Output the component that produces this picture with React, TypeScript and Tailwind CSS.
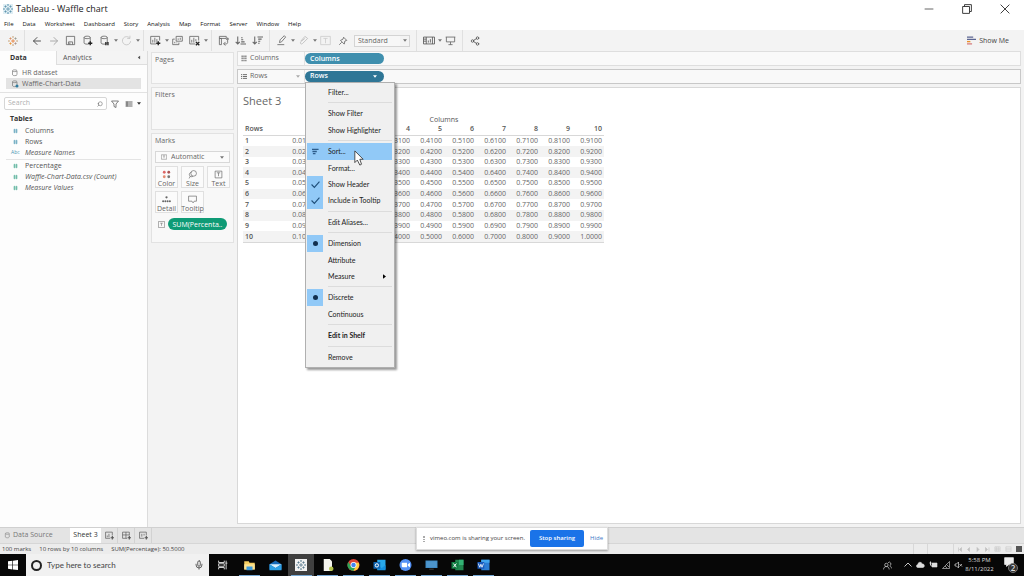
import React from "react";
import { ArrowLeft, ArrowRight, Mic, Search, Share2 } from "lucide-react";

type IconProps = { children: React.ReactNode; className?: string; box?: string };

function Icon({ children, className = "w-[11px] h-[11px] text-[#666]", box = "0 0 16 16" }: IconProps) {
  return (
    <svg viewBox={box} className={`shrink-0 ${className}`} fill="none" stroke="currentColor" strokeWidth="1.2" aria-hidden="true">
      {children}
    </svg>
  );
}

function Caret({ className = "text-[#777]" }: { className?: string }) {
  return (
    <svg viewBox="0 0 8 5" className={`w-[4px] h-[3px] shrink-0 ${className}`} fill="currentColor" aria-hidden="true">
      <path d="M0 0h8L4 5z" />
    </svg>
  );
}

function TableauMark({ className, color }: { className: string; color?: string }) {
  return (
    <Icon className={className}>
      <g strokeWidth="1.3">
        <path d="M8 5v6M5 8h6" stroke={color || "#e8762d"} />
        <path d="M4 2.2v3.6M2.2 4h3.6" stroke={color || "#d98a5b"} />
        <path d="M12 2.2v3.6M10.2 4h3.6" stroke={color || "#9a9a8b"} />
        <path d="M4 10.2v3.6M2.2 12h3.6" stroke={color || "#eb912c"} />
        <path d="M12 10.2v3.6M10.2 12h3.6" stroke={color || "#a58c82"} />
        <path d="M8 0v3M6.5 1.5h3M8 13v3M6.5 14.5h3M1.5 6.5v3M0 8h3M14.5 6.5v3M13 8h3" stroke={color || "#c9a57c"} strokeWidth="1" />
      </g>
    </Icon>
  );
}

function Tool({ label, children }: { label: string; children: React.ReactNode }) {
  return (
    <button aria-label={label} className="w-[17px] h-full flex items-center justify-center shrink-0 text-[#555]">
      {children}
    </button>
  );
}

const Drop = () => (
  <span className="w-[5px] flex justify-center shrink-0">
    <Caret />
  </span>
);
const Divider = () => (
  <span className="w-[7px] h-full flex justify-center shrink-0">
    <span className="w-px h-full bg-[#e0e0e0]" />
  </span>
);

const Cylinder = () => <path d="M3 3.5c0-2.4 9-2.4 9 0v8c0 2.4-9 2.4-9 0zM3 3.5c0 2.4 9 2.4 9 0" />;

function Toolbar() {
  return (
    <div className="h-[21px] shrink-0 bg-[#f3f3f3] flex items-center pl-1 pr-[15px]">
      <Tool label="Start page"><TableauMark className="w-[10px] h-[10px]" /></Tool>
      <Divider />
      <Tool label="Undo"><ArrowLeft className="w-[12px] h-[12px]" /></Tool>
      <Tool label="Redo"><ArrowRight className="w-[12px] h-[12px] text-[#aaa]" /></Tool>
      <Tool label="Save"><Icon><path d="M2 2h12v12H2zM5 14v-4h6v4M7 11v3" /></Icon></Tool>
      <Tool label="New data source">
        <Icon><Cylinder /><path d="M12 9v6M9 12h6" stroke="#222" strokeWidth="2" /></Icon>
      </Tool>
      <Tool label="Pause auto updates">
        <Icon><Cylinder /><path d="M10 10v5M13 10v5" stroke="#222" strokeWidth="2" /></Icon>
      </Tool>
      <Drop />
      <Tool label="Run update">
        <Icon className="w-[11px] h-[11px] text-[#c4c4c4]"><path d="M13 5A6 6 0 1 0 14 9M13 1v4H9" /></Icon>
      </Tool>
      <Drop />
      <Divider />
      <Tool label="New worksheet">
        <Icon><path d="M14 8V2H1v11h8M4 11V7M7 11V4M10 10V6" /><path d="M12 9v6M9 12h6" stroke="#222" strokeWidth="2" /></Icon>
      </Tool>
      <Drop />
      <Tool label="Duplicate"><Icon><path d="M6 2h9v7H6zM4 6H1v8h9v-3M9 7V5M12 7V4M4 12v-2M7 12v-1" /></Icon></Tool>
      <Tool label="Clear sheet">
        <Icon><path d="M14 8V2H1v11h8M4 11V7M7 11V4M10 9V6" /><path d="M10 10l5 5M15 10l-5 5" stroke="#222" strokeWidth="2" /></Icon>
      </Tool>
      <Drop />
      <Divider />
      <Tool label="Swap rows and columns"><Icon><path d="M2 2h10v3H2zM2 5h3v9H2zM14 5v6c0 2-2 2-5 2M11 10l-3 3 3 2M12 7l2-3 2 3" /></Icon></Tool>
      <Tool label="Sort ascending"><Icon><path d="M4 2v11M1 10l3 3 3-3M9 4h2M9 7h3M9 10h5M8 13h8" strokeWidth="1.5" /></Icon></Tool>
      <Tool label="Sort descending"><Icon><path d="M4 2v11M1 10l3 3 3-3M8 3h8M9 6h5M9 9h3M9 12h2" strokeWidth="1.5" /></Icon></Tool>
      <Divider />
      <Tool label="Highlight"><Icon><path d="M5 11l1-4 6-6 2 2-6 7zM2 14h10" /></Icon></Tool>
      <Drop />
      <Tool label="Group members"><Icon className="w-[11px] h-[11px] text-[#bbb]"><path d="M4 9l6-7 4 3-7 7c-3 3-5-1-2-3l5-4" /></Icon></Tool>
      <Drop />
      <Tool label="Show mark labels"><Icon className="w-[11px] h-[11px] text-[#ccc]"><path d="M1 2h14v12H1zM5 5h6M8 5v7" /></Icon></Tool>
      <Tool label="Fix axes"><Icon className="w-[10px] h-[10px] text-[#555]"><path d="M9 2l5 5-3 1-1 5-6-6 4-2zM6 10l-4 4" /></Icon></Tool>
      <select aria-label="Fit" defaultValue="Standard" className="appearance-none ml-[3px] w-[46px] h-[12px] border border-[#d4d4d4] border-r-0 bg-[#f7f7f7] pl-[3px] text-[7px] leading-[10px] text-[#666] outline-none">
        <option>Standard</option>
      </select>
      <span className="w-[10px] mr-[3px] h-[12px] border border-[#d4d4d4] border-l-0 flex items-center justify-center shrink-0"><Caret /></span>
      <Divider />
      <Tool label="Show cards"><Icon className="w-[12px] h-[11px] text-[#555]"><path d="M0 3h16v10H0zM4 3v10M0 6h4M0 9h4M7 11V8M10 11V6M13 3v10" /></Icon></Tool>
      <Drop />
      <Tool label="Presentation mode"><Icon><path d="M1 3h14M2 3v7h12V3M8 10v4M5 14h6" /></Icon></Tool>
      <Divider />
      <Tool label="Share"><Share2 className="w-[10px] h-[10px]" /></Tool>
      <button className="ml-auto flex items-center gap-[3px] text-[7px] leading-[10px] text-[#444] whitespace-nowrap">
        <Icon className="w-[9px] h-[9px]">
          <path d="M0 2h11M0 6h16" stroke="#5c6692" strokeWidth="2.5" />
          <path d="M0 10h6" stroke="#eb912c" strokeWidth="2.5" />
          <path d="M0 14h9" stroke="#d98888" strokeWidth="2.5" />
        </Icon>
        Show Me
      </button>
    </div>
  );
}

const fields = [
  { name: "Columns", color: "text-[#4996b2]" },
  { name: "Rows", color: "text-[#4996b2]" },
  { name: "Measure Names", color: "text-[#4996b2]", abc: true, italic: true },
  { name: "Percentage", color: "text-[#3fa78c]", top: true },
  { name: "Waffle-Chart-Data.csv (Count)", color: "text-[#3fa78c]", italic: true },
  { name: "Measure Values", color: "text-[#3fa78c]", italic: true },
];

function DataPane() {
  return (
    <aside className="w-[148px] shrink-0 bg-[#fdfdfd] border-r border-[#dcdcdc] text-[#555] text-[7px]">
      <div className="flex h-[14px] leading-[14px]">
        <button className="w-[56px] pl-[10px] text-left font-bold text-[#333]">Data</button>
        <button className="flex-1 px-[6px] flex justify-between items-center bg-[#f4f4f4] border-l border-b border-[#dedede]">
          Analytics
          <Caret className="rotate-90" />
        </button>
      </div>
      <ul className="pl-[6px] pr-[6px] pt-[2px] pb-[3px] border-b border-[#e2e2e2] leading-[11px] text-[#666]">
        <li className="flex items-center gap-[3px] pl-[5px]">
          <Icon className="w-[8px] h-[8px]"><Cylinder /></Icon>HR dataset
        </li>
        <li className="flex items-center gap-[3px] pl-[5px] bg-[#e3e3e3]">
          <Icon className="w-[8px] h-[8px]"><Cylinder /><circle cx="12" cy="12" r="3" fill="#2e7ca0" stroke="none" /></Icon>Waffle-Chart-Data
        </li>
      </ul>
      <div className="flex items-center pl-1 pr-[6px] pt-1 gap-[4px]">
        <label className="flex items-center w-[106px] h-[13px] border border-[#d6d6d6] rounded-[2px] px-[3px] bg-white">
          <input placeholder="Search" aria-label="Search fields" className="w-full min-w-0 outline-none placeholder:text-[#b0b0b0]" />
          <Search className="w-[6px] h-[6px] shrink-0 -scale-x-100" />
        </label>
        <Icon className="w-[8px] h-[8px]"><path d="M1 2h14L10 8v7l-4-2V8z" strokeWidth="1.5" /></Icon>
        <Icon className="w-[8px] h-[8px] ml-[2px]"><path d="M1 4h14M1 8h14M1 12h14M4 3v10" strokeWidth="1.8" /></Icon>
        <Caret className="text-[#333]" />
      </div>
      <h2 className="pl-[10px] mt-[3px] font-bold leading-[11px] text-[#333]">Tables</h2>
      <ul className="mt-[1px] mx-[6px] leading-[11px]">
        {fields.map((f) => (
          <li key={f.name} className={`flex items-center pl-[5px] ${f.top ? "border-t border-[#e4e4e4] mt-px" : ""}`}>
            {f.abc ? (
              <span className="w-[14px] text-[5px] text-[#4996b2]">Abc</span>
            ) : (
              <span className="w-[14px] flex pl-[2px]">
                <Icon className={`w-[5px] h-[6px] ${f.color}`}><path d="M5 1v14M11 1v14M1 5h14M1 11h14" strokeWidth="2" /></Icon>
              </span>
            )}
            <span className={`whitespace-nowrap ${f.italic ? "italic" : ""}`}>{f.name}</span>
          </li>
        ))}
      </ul>
    </aside>
  );
}

const marks = [
  {
    name: "Color",
    icon: <g stroke="none"><circle cx="4" cy="4" r="2.5" fill="#d66" /><circle cx="12" cy="4" r="2.5" fill="#a55" /><circle cx="4" cy="12" r="2.5" fill="#e38b72" /><circle cx="12" cy="12" r="2.5" fill="#777" /></g>,
  },
  { name: "Size", icon: <><circle cx="10" cy="6" r="5" /><path d="M6 4a4 4 0 1 0 3 7M4 11l-2 4" /></> },
  { name: "Text", icon: <path d="M2 2h12v12H2zM5 5h6M8 5v6" /> },
  { name: "Detail", icon: <g fill="currentColor" stroke="none"><circle cx="8" cy="4" r="2" /><circle cx="2" cy="11" r="1.8" /><circle cx="6" cy="11" r="1.8" /><circle cx="10" cy="11" r="1.8" /><circle cx="14" cy="11" r="1.8" /></g> },
  { name: "Tooltip", icon: <path d="M1 2h14v9h-4l-2 3-2-3H1z" /> },
];

function Cards() {
  const card = "mx-[3px] bg-[#f8f8f8] border border-[#e2e2e2] px-[3px] pt-[2px] leading-[9px]";
  return (
    <div className="w-[89px] shrink-0 bg-[#f3f3f3] flex flex-col gap-[3px] text-[7px] text-[#666] pt-px">
      <section className={`${card} h-[32px]`}>Pages</section>
      <section className={`${card} h-[43px]`}>Filters</section>
      <section className={`${card} h-[110px]`}>
        <h3>Marks</h3>
        <div className="mt-[6px] h-[12px] flex items-center border border-[#d8d8d8] bg-[#fbfbfb] px-[5px]">
          <Icon className="w-[6px] h-[6px]"><path d="M1 2h14v12H1zM5 5h6M8 5v6" /></Icon>
          <select aria-label="Mark type" className="appearance-none outline-none flex-1 pl-[4px] leading-[10px]"><option>Automatic</option></select>
          <Caret />
        </div>
        <div className="grid grid-cols-3 gap-[3px] mt-[3px]">
          {marks.map((m) => (
            <button key={m.name} className="h-[22px] border border-[#e0e0e0] bg-[#fbfbfb] flex flex-col items-center justify-between pt-[3px] leading-[9px]">
              <Icon className="w-[9px] h-[9px]">{m.icon}</Icon>
              {m.name}
            </button>
          ))}
        </div>
        <div className="flex items-center gap-[3px] mt-[5px] pl-[3px]">
          <Icon className="w-[7px] h-[7px]"><path d="M1 1h14v14H1zM5 5h6M8 5v6" /></Icon>
          <button className="w-[59px] h-[12px] rounded-full bg-[#0f9b76] text-white font-medium">SUM(Percenta..</button>
        </div>
      </section>
    </div>
  );
}

type MenuItem = { label: string; mark?: "check" | "dot" | "sort"; active?: boolean; bold?: boolean; sub?: boolean };
const menu: MenuItem[][] = [
  [{ label: "Filter..." }],
  [{ label: "Show Filter" }, { label: "Show Highlighter" }],
  [
    { label: "Sort...", mark: "sort", active: true },
    { label: "Format..." },
    { label: "Show Header", mark: "check" },
    { label: "Include in Tooltip", mark: "check" },
  ],
  [{ label: "Edit Aliases..." }],
  [{ label: "Dimension", mark: "dot" }, { label: "Attribute" }, { label: "Measure", sub: true }],
  [{ label: "Discrete", mark: "dot" }, { label: "Continuous" }],
  [{ label: "Edit in Shelf", bold: true }],
  [{ label: "Remove" }],
];

function RowsMenu() {
  return (
    <div role="menu" className="absolute z-10 left-0 top-full w-[90px] h-[286px] flex flex-col pl-px pr-[2px] pt-px pb-[2px] bg-[#f0f0f0] border border-[#b0b0b0] shadow-[2px_2px_2px_rgba(0,0,0,0.4)] text-[7px] text-[#222] font-[Lato,sans-serif]">
      {menu.map((group, i) => (
        <React.Fragment key={i}>
          {i > 0 && <div className="h-[5px] shrink-0 flex items-center"><span className="h-px w-full ml-[21px] bg-[#dcdcdc]" /></div>}
          {group.map((item) => (
            <button key={item.label} role="menuitem" className={`flex-1 min-h-0 flex items-center text-left whitespace-nowrap ${item.active ? "bg-[#91c9f7]" : ""} ${item.bold ? "font-bold" : ""}`}>
              <span className={`w-[16px] h-full mr-[5px] flex items-center justify-center ${item.mark ? "bg-[#91c9f7]" : ""}`}>
                {item.mark === "check" && <Icon className="w-[9px] h-[9px] text-[#1f4e79]"><path d="M1 8l5 5 9-10" strokeWidth="2" /></Icon>}
                {item.mark === "dot" && <span className="w-[5px] h-[5px] rounded-full bg-[#12304f]" />}
                {item.mark === "sort" && <Icon className="w-[7px] h-[7px] text-[#2d5c8a]"><path d="M0 3h15M1 8h10M2 13h6" strokeWidth="3" /></Icon>}
              </span>
              {item.label}
              {item.sub && (
                <svg viewBox="0 0 4 6" className="ml-auto mr-[6px] w-[3px] h-[5px]" aria-hidden="true"><path d="M0 0l4 3-4 3z" /></svg>
              )}
            </button>
          ))}
        </React.Fragment>
      ))}
      <svg viewBox="0 0 12 19" className="absolute left-[48px] top-[67px] w-[10px] h-[16px]" aria-hidden="true">
        <path d="M1 1v14l3-3 3 6 2-1-2-6h4z" fill="#fff" stroke="#333" strokeWidth="1" />
      </svg>
    </div>
  );
}

function Shelves() {
  return (
    <div className="flex flex-col gap-[3px] text-[7px] text-[#666]">
      <div className="h-[15px] flex items-center bg-[#f9f9f9] border border-[#dedede]">
        <div className="w-[67px] h-full flex items-center gap-[3px] pl-[3px] border-r border-[#e2e2e2]">
          <Icon className="w-[6px] h-[7px]"><path d="M3 0v16M8 0v16M13 0v16" strokeWidth="3" strokeDasharray="4 1.5" /></Icon>Columns
        </div>
        <button className="w-[79px] h-[11px] rounded-full bg-[#3f8fae] text-white font-semibold text-left leading-[11px] pl-[5px]">Columns</button>
      </div>
      <div className="h-[15px] flex items-center bg-[#f9f9f9] border border-[#c8c8c8]">
        <div className="w-[67px] h-full flex items-center gap-[3px] pl-[3px] pr-[4px] border-r border-[#e2e2e2]">
          <Icon className="w-[6px] h-[7px]"><path d="M0 3h16M0 8h16M0 13h16" strokeWidth="2.5" strokeDasharray="3 2 11" /></Icon>
          <span className="flex-1">Rows</span>
          <Caret className="text-[#aaa]" />
        </div>
        <div className="relative">
          <button className="w-[79px] h-[11px] rounded-full bg-[#2f7696] text-white font-semibold flex items-center justify-between pl-[5px] pr-[7px]">
            Rows<Caret className="text-white" />
          </button>
          <RowsMenu />
        </div>
      </div>
    </div>
  );
}

const ten = Array.from({ length: 10 }, (_, i) => i + 1);

function Sheet() {
  return (
    <main className="flex-1 min-h-0 mt-[3px] bg-white border border-[#d8d8d8] pl-[5px] pt-[5px] text-[#666]">
      <h1 className="text-[11px] leading-[16px]">Sheet 3</h1>
      <table className="mt-[6px] w-[361px] h-[128px] table-fixed border-collapse text-[7px] leading-[8px] text-right">
        <thead className="text-[#555]">
          <tr className="h-[9px]">
            <td className="w-[41px] p-0" />
            <th colSpan={10} className="font-normal text-center p-0">Columns</th>
          </tr>
          <tr className="h-[11px] border-b border-[#d8d8d8]">
            <th className="font-semibold text-left p-0 pl-[2px]">Rows</th>
            {ten.map((c) => <th key={c} className="font-semibold p-0 pr-[2px]">{c}</th>)}
          </tr>
        </thead>
        <tbody>
          {ten.map((r) => (
            <tr key={r} className="even:bg-[#f3f3f3] last:border-b border-[#d8d8d8]">
              <th className="font-semibold text-left p-0 pl-[2px] text-[#555]">{r}</th>
              {ten.map((c) => <td key={c} className="p-0 pr-[2px]">{((c - 1) / 10 + r / 100).toFixed(4)}</td>)}
            </tr>
          ))}
        </tbody>
      </table>
    </main>
  );
}

function SheetTabs() {
  return (
    <div className="h-[16px] shrink-0 flex items-center bg-[#e4e4e4] border-t border-[#d0d0d0] text-[7px] text-[#777]">
      <button className="w-[70px] pl-[4px] flex items-center gap-[2px]">
        <Icon className="w-[7px] h-[7px]"><Cylinder /></Icon>Data Source
      </button>
      <button className="w-[31px] h-full bg-white text-[#333] font-medium whitespace-nowrap">Sheet 3</button>
      {["New worksheet", "New dashboard", "New story"].map((label, i) => (
        <button key={label} aria-label={label} className="w-[17px] h-full flex items-center justify-center border-r border-[#d2d2d2] text-[#555]">
          <Icon className="w-[9px] h-[9px]">
            <path d={["M13 8V2H1v11h8M4 11V8M7 11V5", "M13 8V2H1v11h8M7 2v11M1 7h12", "M13 8V2H1v11h8M5 5v5M9 5v3"][i]} />
            <path d="M13 9v6M10 12h6" strokeWidth="2" />
          </Icon>
        </button>
      ))}
    </div>
  );
}

function StatusBar() {
  return (
    <div className="h-[11px] shrink-0 flex items-center gap-[8px] pl-[2px] pr-[2px] bg-[#ececec] border-t border-[#d6d6d6] text-[6px] text-[#444] whitespace-nowrap">
      <span>100 marks</span>
      <span>10 rows by 10 columns</span>
      <span>SUM(Percentage): 50.5000</span>
      <div className="ml-auto h-full flex items-center gap-[4px] text-[#c0c0c0]">
        <span className="w-[15px] h-full border-x border-[#d8d8d8]" />
        <span className="w-[22px] h-full border-r border-[#d8d8d8]" />
        <Icon className="w-[32px] h-[5px]" box="0 0 64 10">
          <path d="M1 1v8M7 1L3 5l4 4zM23 1l-4 4 4 4zM38 1l4 4-4 4zM55 1l4 4-4 4zM62 1v8" fill="currentColor" />
        </Icon>
        <Icon className="w-[7px] h-[6px]"><path d="M1 2h14v12H1zM1 6h14M1 10h14M5 2v12M10 2v12" /></Icon>
        <Icon className="w-[7px] h-[6px]"><path d="M1 2h14v12H1zM1 6h14M1 10h14" /></Icon>
        <span className="w-[6px] h-[6px] bg-[#555]" />
      </div>
    </div>
  );
}

const apps = [
  { name: "File Explorer", open: true, art: <><path d="M1 3h6l1 2h7v9H1z" fill="#f5ce62" /><path d="M1 7h14v7H1z" fill="#fbe293" /><path d="M4 10h8v5H4z" fill="#3d9bdc" /></> },
  { name: "Mail", open: false, art: <><path d="M0 7l8-5 8 5v7H0z" fill="#1769b5" /><path d="M0 7h16l-8 5z" fill="#d7effc" /><path d="M0 7l8 5 8-5v8H0z" fill="#2ea0e3" /></> },
  { name: "Tableau", open: true, active: true, art: null },
  { name: "Document", open: true, art: <><path d="M3 0h8l3 3v13H3z" fill="#f5f5ee" /><circle cx="13" cy="13" r="3" fill="#b3c34c" /></> },
  { name: "Chrome", open: true, art: <><circle cx="8" cy="8" r="8" fill="#db4437" /><path d="M1 4a8 8 0 0 0 7 12l3-6H5z" fill="#2fa457" /><path d="M8 16a8 8 0 0 0 7-11H8l3 5z" fill="#ffcd40" /><circle cx="8" cy="8" r="4" fill="#fff" /><circle cx="8" cy="8" r="3" fill="#4285f4" /></> },
  { name: "Outlook", open: true, art: <><path d="M5 1h11v13H5z" fill="#28a8ea" /><path d="M5 8l6 4 5-4v7H5z" fill="#1490df" /><path d="M0 4h9v9H0z" fill="#0f64b0" /><circle cx="4.5" cy="8.5" r="2.2" fill="none" stroke="#fff" strokeWidth="1.3" /></> },
  { name: "Zoom", open: true, art: <><circle cx="8" cy="8" r="8" fill="#5591f5" /><path d="M3 5h7v6H4L3 10zM11 7l3-2v6l-3-2z" fill="#fff" /></> },
  { name: "Remote Desktop", open: true, art: <><path d="M0 2h16v10H0z" fill="#3b88c3" /><path d="M1 3h14v8H1z" fill="#4d95cc" /><path d="M5 13h6v1H5z" fill="#555" /></> },
  { name: "Excel", open: true, art: <><path d="M5 1h11v14H5z" fill="#21874f" /><path d="M10 1h6v7h-6z" fill="#33b274" /><path d="M0 4h9v9H0z" fill="#107c41" /><path d="M2.5 6l4 5M6.5 6l-4 5" stroke="#fff" strokeWidth="1.3" /></> },
  { name: "Word", open: true, art: <><path d="M5 1h11v14H5z" fill="#2b7cd3" /><path d="M5 1h11v4H5z" fill="#41a5ee" /><path d="M0 4h9v9H0z" fill="#185abd" /><path d="M1 6l2 5 1.5-4L6 11l2-5" fill="none" stroke="#fff" strokeWidth="1.1" /></> },
];

function Taskbar() {
  return (
    <footer className="h-[22px] shrink-0 flex items-stretch bg-[#070707] text-white">
      <button aria-label="Start" className="w-[26px] flex items-center justify-center">
        <svg viewBox="0 0 16 16" className="w-[10px] h-[10px]" fill="#fff"><path d="M0 2l7-1v6.5H0zM8 1l8-1v7.5H8zM0 8.5h7V15l-7-1zM8 8.5h8V16l-8-1z" /></svg>
      </button>
      <label className="w-[183px] flex items-center bg-[#f1f1f1] px-[5px] gap-[5px]">
        <span className="w-[11px] h-[11px] rounded-full border-2 border-[#222] shrink-0" />
        <input aria-label="Windows search" placeholder="Type here to search" className="flex-1 min-w-0 outline-none text-[8px] font-[Lato,sans-serif] placeholder:text-[#444]" />
        <Mic className="w-[10px] h-[10px] text-[#444]" />
      </label>
      <button aria-label="Task view" className="w-[27px] flex items-center justify-center text-[#ddd]">
        <Icon className="w-[10px] h-[10px]"><path d="M1 1v3h9V1M1 15v-3h9v3M1 6h9v4H1zM13 1v14M12 5h3" strokeWidth="1.5" /></Icon>
      </button>
      {apps.map((a) => (
        <button key={a.name} aria-label={a.name} className={`w-[26px] flex flex-col items-center justify-between ${a.active ? "bg-[#3f3f3f]" : ""}`}>
          <span className="flex-1 flex items-center">
            {a.art ? (
              <svg viewBox="0 0 16 16" className="w-[13px] h-[12px]" aria-hidden="true">{a.art}</svg>
            ) : (
              <span className="bg-[#f2f2f2] p-px"><TableauMark className="w-[10px] h-[10px]" color="#54768c" /></span>
            )}
          </span>
          <span className={`h-px w-[21px] ${a.open ? "bg-[#76a9d6]" : ""}`} />
        </button>
      ))}
      <div className="ml-auto flex items-center gap-[4px] pr-[6px] text-[#ddd]">
        <Icon className="w-[9px] h-[9px] mr-[8px]"><circle cx="6" cy="7" r="3" /><path d="M1 15c0-7 10-7 10 0M9 3a3 3 0 1 1 3 5M12 9c2 0 3 2 3 4" /></Icon>
        <Icon className="w-[8px] h-[8px]"><path d="M1 11l7-7 7 7" strokeWidth="1.8" /></Icon>
        <Icon className="w-[9px] h-[8px]"><path d="M3 13a3 3 0 0 1 0-6 4 4 0 0 1 8-1 3 3 0 0 1 2 7z" fill="currentColor" /></Icon>
        <Icon className="w-[9px] h-[8px]"><path d="M5 4h10v8H5z" fill="currentColor" /><path d="M0 4h4M2 1v7l3 3" strokeWidth="2" /></Icon>
        <Icon className="w-[8px] h-[8px]"><path d="M15 1v14H1zM6 10l4 4M9 7l5 5" /></Icon>
        <Icon className="w-[9px] h-[8px]"><path d="M1 6h3l4-4v12l-4-4H1zM10 6l5 5M15 6l-5 5" strokeWidth="1.4" /></Icon>
        <div className="w-[25px] flex flex-col items-center text-[6px] leading-[9px] whitespace-nowrap">
          <span>5:58 PM</span>
          <span>8/11/2022</span>
        </div>
        <div className="relative ml-[8px] w-[14px] h-[16px]">
          <Icon className="w-[10px] h-[10px] text-[#eee]"><path d="M1 1h14v11H8l-4 3v-3H1z" fill="currentColor" /></Icon>
          <span className="absolute right-0 bottom-0 w-[10px] h-[10px] rounded-full bg-[#333] border border-[#777] text-[8px] leading-[8px] text-center font-semibold">2</span>
        </div>
      </div>
    </footer>
  );
}

const menuBar = ["File", "Data", "Worksheet", "Dashboard", "Story", "Analysis", "Map", "Format", "Server", "Window", "Help"];

export default function App() {
  return (
    <div className="relative h-screen flex flex-col overflow-hidden bg-[#f3f3f3] font-['Open_Sans',sans-serif]">
      <header className="h-[18px] shrink-0 flex items-center bg-white pl-[3px] pr-[14px] text-[#222]">
        <TableauMark className="w-[10px] h-[10px] bg-[#e0eef4]" color="#5b93ad" />
        <span className="ml-[3px] text-[9px] leading-[18px]">Tableau - Waffle chart</span>
        <div className="ml-auto flex gap-[28px] text-[#333]">
          <button aria-label="Minimize"><Icon className="w-[10px] h-[10px]"><path d="M1 8h14" /></Icon></button>
          <button aria-label="Restore"><Icon className="w-[10px] h-[10px]"><path d="M1 4h11v11H1zM4 4V1h11v11h-3" strokeWidth="1.5" /></Icon></button>
          <button aria-label="Close"><Icon className="w-[10px] h-[10px]"><path d="M1 1l14 14M15 1L1 15" strokeWidth="1.5" /></Icon></button>
        </div>
      </header>
      <nav className="h-[12px] shrink-0 flex items-center gap-[9px] bg-white pl-[4px] text-[6px] text-[#111]">
        {menuBar.map((m) => <button key={m}>{m}</button>)}
      </nav>
      <Toolbar />
      <div className="flex-1 min-h-0 flex">
        <DataPane />
        <Cards />
        <div className="flex-1 min-w-0 flex flex-col pr-[3px] pb-[3px]">
          <Shelves />
          <Sheet />
        </div>
      </div>
      <SheetTabs />
      <StatusBar />
      <Taskbar />
      <div role="status" className="absolute left-1/2 -translate-x-1/2 bottom-[26px] w-[192px] h-[23px] flex items-center bg-white border border-[#ddd] shadow-[0_1px_2px_rgba(0,0,0,0.35)] pl-[6px] pr-[4px] text-[6px] text-[#444] whitespace-nowrap">
        <span className="w-[2px] h-[6px] border-x border-dotted border-[#aaa] mr-[5px]" />
        vimeo.com is sharing your screen.
        <button className="ml-auto w-[54px] h-[17px] rounded-[2px] bg-[#1a73e8] text-white font-semibold">Stop sharing</button>
        <a href="#hide" className="ml-[6px] text-[#3c78c8]">Hide</a>
      </div>
    </div>
  );
}
